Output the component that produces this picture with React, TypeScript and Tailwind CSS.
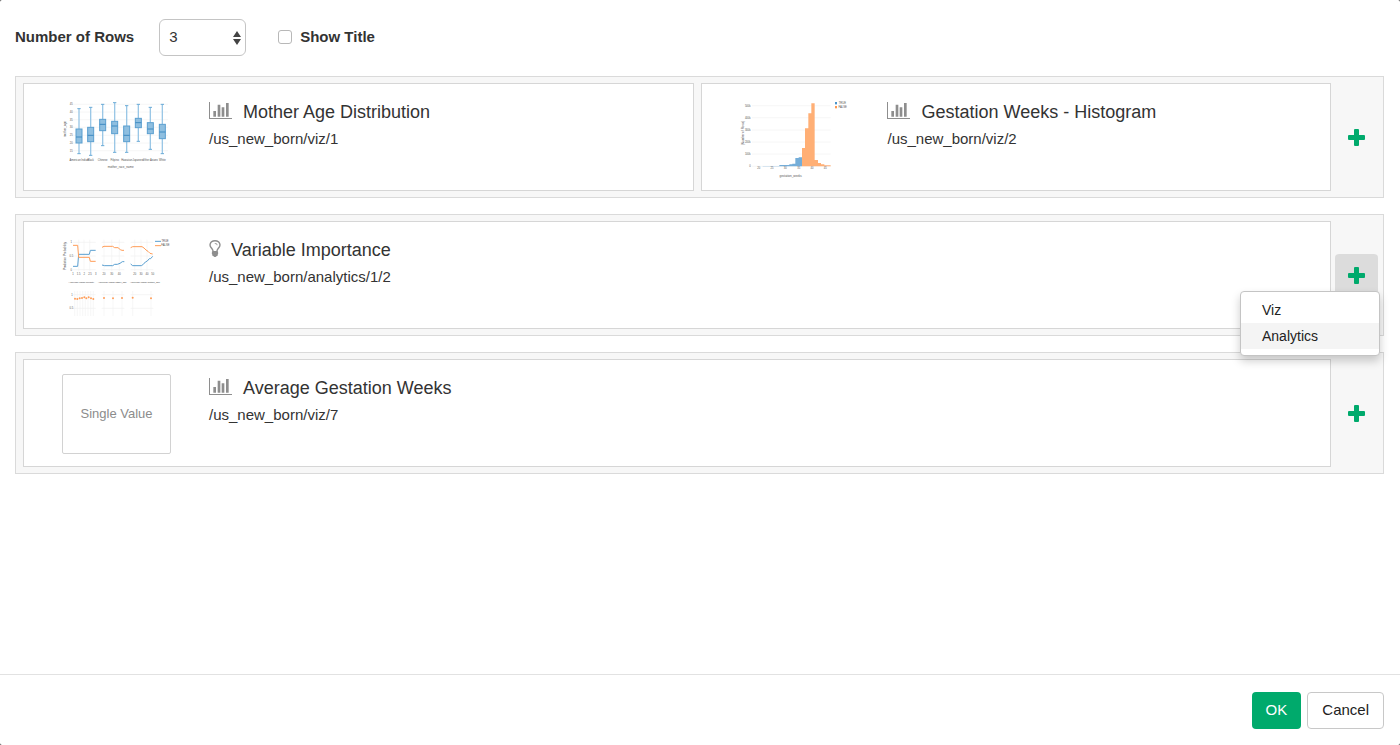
import React, { useState } from 'react';

type Kind = 'viz' | 'analytics';

interface Item {
    title: string;
    path: string;
    kind: Kind;
    thumbnail: React.ReactNode;
}

interface Row {
    id: number;
    items: Item[];
}

const BarChartIcon = () => (
    <svg viewBox="0 0 69 51" className="w-[23px] h-[17px] mb-1 shrink-0 text-[#8e8e8e]" fill="currentColor" aria-hidden="true">
        <path d="M0 0h3v48h66v3H0z" />
        <path d="M13 27h8v17h-8zM26 8h8v36h-8zM38 16h8v28h-8zM51 3h8v41h-8z" />
    </svg>
);

const BulbIcon = () => (
    <svg viewBox="384 128 1024 1536" className="w-[12px] h-[17px] mb-1 shrink-0 text-[#8e8e8e]" fill="currentColor" aria-hidden="true">
        <path d="M1120 576q0 13-9.5 22.5t-22.5 9.5-22.5-9.5-9.5-22.5q0-46-54-71t-106-25q-13 0-22.5-9.5t-9.5-22.5 9.5-22.5 22.5-9.5q50 0 99.5 16t87 54 37.5 90zm160 0q0-72-34.5-134t-90-101.5-123-62-136.5-22.5-136.5 22.5-123 62-90 101.5-34.5 134q0 101 68 180 10 11 30.5 33t30.5 33q128 153 141 298h228q13-145 141-298 10-11 30.5-33t30.5-33q68-79 68-180zm128 0q0 155-103 268-45 49-74.5 87t-59.5 95.5-34 107.5q47 28 47 82 0 37-25 64 25 27 25 64 0 52-45 81 13 23 13 47 0 46-31.5 71t-77.5 25q-20 44-60 70t-87 26-87-26-60-70q-46 0-77.5-25t-31.5-71q0-24 13-47-45-29-45-81 0-37 25-64-25-27-25-64 0-54 47-82-4-50-34-107.5t-59.5-95.5-74.5-87q-103-113-103-268 0-99 44.5-184.5t117-142 164-89 186.5-32.5 186.5 32.5 164 89 117 142 44.5 184.5z" />
        <path d="M740 1150h312v390H740z" />
    </svg>
);

const PlusIcon = () => (
    <svg viewBox="0 0 17 17" className="w-[17px] h-[17px]" fill="currentColor" aria-hidden="true">
        <rect x="6" y="0" width="5" height="17" rx="1" />
        <rect x="0" y="6" width="17" height="5" rx="1" />
    </svg>
);

// x, whisker top, box top, median, box bottom, whisker bottom
const boxes = [
    [87, 53, 114, 138, 156, 188],
    [122, 49, 109, 133, 152, 193],
    [158, 40, 85, 100, 119, 164],
    [194, 35, 91, 105, 128, 184],
    [230, 44, 105, 133, 152, 184],
    [265, 40, 82, 95, 110, 151],
    [301, 49, 95, 114, 128, 175],
    [337, 40, 100, 123, 143, 188],
];

const boxLabels = ['American Indian', 'Black', 'Chinese', 'Filipino', 'Hawaiian', 'Japanese', 'Other Asians', 'White'];

const BoxPlotThumb = () => (
    <svg viewBox="36 21 327 240" className="w-[109px] h-20 shrink-0" fontSize="8" fill="#555" textAnchor="middle" role="img" aria-label="mother_age by mother_race_name">
        {[40, 63, 86, 109, 133, 156, 179].map((y, i) => (
            <g key={y}>
                <path d={`M70 ${y}H354`} stroke="#f2f2f2" strokeWidth="2" />
                <text x="64" y={y + 3}>{45 - i * 5}</text>
            </g>
        ))}
        {boxes.map(([x, hi, q3, med, q1, lo], i) => (
            <g key={x}>
                <path d={`M${x} ${hi}V${q3}M${x} ${q1}V${lo}`} stroke="#9ac7e6" strokeWidth="4" />
                <path d={`M${x - 5} ${hi}h10M${x - 5} ${lo}h10`} stroke="#6aaad6" strokeWidth="3" />
                <rect x={x - 9} y={q3} width="18" height={q1 - q3} fill="#8fbfe0" stroke="#5a9fd0" strokeWidth="3" />
                <path d={`M${x - 9} ${med}h18`} stroke="#3f8bc2" strokeWidth="3" />
                <text x={x} y="210">{boxLabels[i]}</text>
            </g>
        ))}
        <text x="212" y="232" fontSize="9">mother_race_name</text>
        <text transform="translate(49 114) rotate(-90)" fontSize="9">mother_age</text>
    </svg>
);

const HistogramThumb = () => (
    <svg viewBox="30 21 327 240" className="w-[109px] h-20 shrink-0" fontSize="8" fill="#555" textAnchor="middle" role="img" aria-label="Number of rows by gestation_weeks">
        {[44, 80, 117, 153, 189, 226].map((y, i) => (
            <g key={y}>
                <path d={`M66 ${y}H302`} stroke="#f2f2f2" strokeWidth="2" />
                <text x="62" y={y + 3} textAnchor="end">{i === 5 ? '0' : `${500 - i * 100}k`}</text>
            </g>
        ))}
        <path d="M98 226v-1h50v-3h30v-2h9v-2h9v-17h10v-2h10v27z" fill="#74add8" />
        <path d="M216 226v-55h9v-59h10V67h9V37h10v170h10v9h9v4h10v3h19v3z" fill="#ffaf75" />
        {[20, 25, 30, 35, 40, 45].map((week, i) => (
            <text key={week} x={86 + i * 40} y="234">{week}</text>
        ))}
        <rect x="315" y="33" width="6" height="7" fill="#4a95cc" />
        <rect x="315" y="45" width="6" height="7" fill="#ff9850" />
        <text x="337" y="39">TRUE</text>
        <text x="338" y="51">FALSE</text>
        <text x="182" y="257" fontSize="9">gestation_weeks</text>
        <text transform="translate(42 126) rotate(-90)" fontSize="9">(Number of Rows)</text>
    </svg>
);

const LinesThumb = () => (
    <svg viewBox="36 15 327 240" className="w-[109px] h-20 shrink-0" fontSize="8" fill="#555" textAnchor="middle" role="img" aria-label="Prediction probability by variable">
        <path d="M69 34h68M69 75h68M69 116h68M155 34h68M155 75h68M155 116h68M242 34h68M242 75h68M242 116h68M69 191h68M69 232h68M155 191h68M155 232h68M242 191h68M242 232h68" stroke="#f0f0f0" strokeWidth="2" />
        <path d="M86 26v94M102 26v94M119 26v94M162 26v94M185 26v94M208 26v94M254 26v94M273 26v94M291 26v94M74 180v76M82 180v76M90 180v76M98 180v76M106 180v76M114 180v76M122 180v76M130 180v76M162 180v76M189 180v76M216 180v76M248 180v76M303 180v76" stroke="#f3f3f3" strokeWidth="2" />
        <g fill="none" strokeWidth="3">
            <path d="M69 106h14l3-36h32l3-12h16M156 102l8 2h24l6-4h8l8-3 7-5h6M242 99l6 5h26l6-4 6-7 6-3 6-7h4l6-7" stroke="#5a9fd0" />
            <path d="M69 43h14l3 36h32l3 12h16M156 49l6-3h26l6 4h10l7 6 5 2h6M242 50l6-3h28l6 4 6 6 6 4 6 6 8 2" stroke="#ff9d58" />
            <path d="M315 31h18" stroke="#5a9fd0" />
            <path d="M315 44h18" stroke="#ff9d58" />
        </g>
        <text x="345" y="34">TRUE</text>
        <text x="346" y="46">FALSE</text>
        {['1', '0.5', '0'].map((tick, i) => (
            <text key={tick} x="64" y={37 + i * 41}>{tick}</text>
        ))}
        <text x="66" y="194">1</text>
        <text x="64" y="235">0.5</text>
        {['1', '1.5', '2', '2.5', '3'].map((tick, i) => (
            <text key={tick} x={69 + i * 17} y="131">{tick}</text>
        ))}
        <text x="162" y="131">20</text>
        <text x="185" y="131">30</text>
        <text x="208" y="131">40</text>
        <text x="254" y="131">20</text>
        <text x="273" y="131">30</text>
        <text x="291" y="131">40</text>
        <text x="308" y="131">50</text>
        <g fontSize="7" fill="#333">
            <text x="94" y="156">American Indian plurality</text>
            <text x="187" y="156">American Indian father_age</text>
            <text x="285" y="156">American Indian mother_age</text>
        </g>
        <text transform="translate(47 75) rotate(-90)" fontSize="9">Prediction Probability</text>
        <g fill="#ff9d58">
            {[[75, 203], [82, 204], [89, 202], [96, 201], [103, 199], [109, 202], [116, 199], [123, 202], [130, 204], [162, 201], [189, 202], [216, 201], [248, 200], [303, 202]].map(([x, y]) => (
                <circle key={x} cx={x} cy={y} r="3" />
            ))}
        </g>
    </svg>
);

const SingleValueThumb = () => (
    <div className="w-[109px] h-20 shrink-0 border border-[#d2d2d2] rounded-xs flex items-center justify-center text-[13px] text-[#8c8c8c]">
        Single Value
    </div>
);

const rows: Row[] = [
    {
        id: 1,
        items: [
            { title: 'Mother Age Distribution', path: '/us_new_born/viz/1', kind: 'viz', thumbnail: <BoxPlotThumb /> },
            { title: 'Gestation Weeks - Histogram', path: '/us_new_born/viz/2', kind: 'viz', thumbnail: <HistogramThumb /> },
        ],
    },
    {
        id: 2,
        items: [
            { title: 'Variable Importance', path: '/us_new_born/analytics/1/2', kind: 'analytics', thumbnail: <LinesThumb /> },
        ],
    },
    {
        id: 3,
        items: [
            { title: 'Average Gestation Weeks', path: '/us_new_born/viz/7', kind: 'viz', thumbnail: <SingleValueThumb /> },
        ],
    },
];

const ItemCard = ({ item }: { item: Item }) => (
    <div className="bg-white border border-[#d6d6d6] flex gap-[38px] pt-[14px] pb-3 pl-[38px] pr-4 min-w-0">
        {item.thumbnail}
        <div className="pt-0.5">
            <h3 className={`flex items-center text-[18px] leading-6 text-[#333] ${item.kind === 'viz' ? 'gap-[11px]' : 'gap-[10px]'}`}>
                {item.kind === 'viz' ? <BarChartIcon /> : <BulbIcon />}
                {item.title}
            </h3>
            <p className="mt-[3px] text-[15px] leading-6 text-[#333]">{item.path}</p>
        </div>
    </div>
);

const AddMenu = () => (
    <div role="menu" className="absolute z-10 top-[37px] -right-0.5 w-[140px] pt-[5px] pb-[6px] bg-white border border-[#c4c4c4] rounded-sm shadow-[0_5px_10px_rgba(0,0,0,0.2)]">
        <button type="button" role="menuitem" className="block w-full h-[26px] pl-[21px] text-left text-[14px] text-[#222] hover:bg-[#f4f4f4]">Viz</button>
        <button type="button" role="menuitem" className="block w-full h-[26px] pl-[21px] text-left text-[14px] text-[#222] bg-[#f4f4f4]">Analytics</button>
    </div>
);

const App = () => {
    const [rowCount, setRowCount] = useState(3);
    const [showTitle, setShowTitle] = useState(false);
    const [openRow, setOpenRow] = useState<number | null>(2);

    return (
        <div className="min-h-screen flex bg-[#444]">
            <div className="flex-1 flex flex-col bg-white rounded-xs text-[15px] text-[#333] font-['Helvetica_Neue','Liberation_Sans',Arial,sans-serif]">
                <main className="flex-1 pl-[15px] pr-4 pt-[18px] pb-4">
                    {/* Options */}
                    <div className="flex items-center h-[38px]">
                        <label htmlFor="rowCount" className="font-bold">Number of Rows</label>
                        <div className="relative ml-[25px]">
                            <select id="rowCount" value={rowCount} onChange={e => setRowCount(Number(e.target.value))}
                                className="block appearance-none w-[87px] h-[37px] pl-[9px] border border-[#c4c4c4] rounded-md bg-white">
                                <option value={1}>1</option>
                                <option value={2}>2</option>
                                <option value={3}>3</option>
                                <option value={4}>4</option>
                            </select>
                            <svg viewBox="0 0 8 14" className="absolute right-[5px] top-3 w-2 h-3.5 pointer-events-none" fill="#444" aria-hidden="true">
                                <path d="M4 0l4 6H0zM4 14l4-6H0z" />
                            </svg>
                        </div>
                        <label className="ml-8 flex items-center gap-2 font-bold">
                            <input type="checkbox" checked={showTitle} onChange={e => setShowTitle(e.target.checked)}
                                className="appearance-none w-3.5 h-3.5 border border-[#b8b8b8] rounded-[3px] bg-white checked:bg-[#00aa6c]" />
                            Show Title
                        </label>
                    </div>

                    {/* Rows */}
                    <div className="mt-5 flex flex-col gap-4">
                        {rows.slice(0, rowCount).map(row => (
                            <section key={row.id} className="flex border border-[#dadada] bg-[#f7f7f7] py-[6px] pl-[7px]">
                                <div className={`flex-1 grid gap-[7px] ${row.items.length === 2 ? 'grid-cols-[16fr_15fr]' : 'grid-cols-1'}`}>
                                    {row.items.map(item => <ItemCard key={item.path} item={item} />)}
                                </div>
                                <div className="w-[52px] pl-1 flex items-center">
                                    <div className="relative">
                                        <button type="button" aria-label="Add item" onClick={() => setOpenRow(openRow === row.id ? null : row.id)}
                                            className={`w-[43px] h-[42px] flex items-center justify-center rounded-sm text-[#00aa6c] ${openRow === row.id ? 'bg-[#dcdcdc]' : ''}`}>
                                            <PlusIcon />
                                        </button>
                                        {openRow === row.id && <AddMenu />}
                                    </div>
                                </div>
                            </section>
                        ))}
                    </div>
                </main>

                <footer className="flex justify-end gap-[6px] border-t border-[#e2e2e2] pt-[17px] pb-4 pr-4">
                    <button type="button" className="h-[37px] px-[14px] rounded-sm bg-[#00aa6c] text-white">OK</button>
                    <button type="button" className="h-[37px] px-[14px] rounded-sm border border-[#c8c8c8] bg-white text-[#222]">Cancel</button>
                </footer>
            </div>
        </div>
    );
};

export default App;
